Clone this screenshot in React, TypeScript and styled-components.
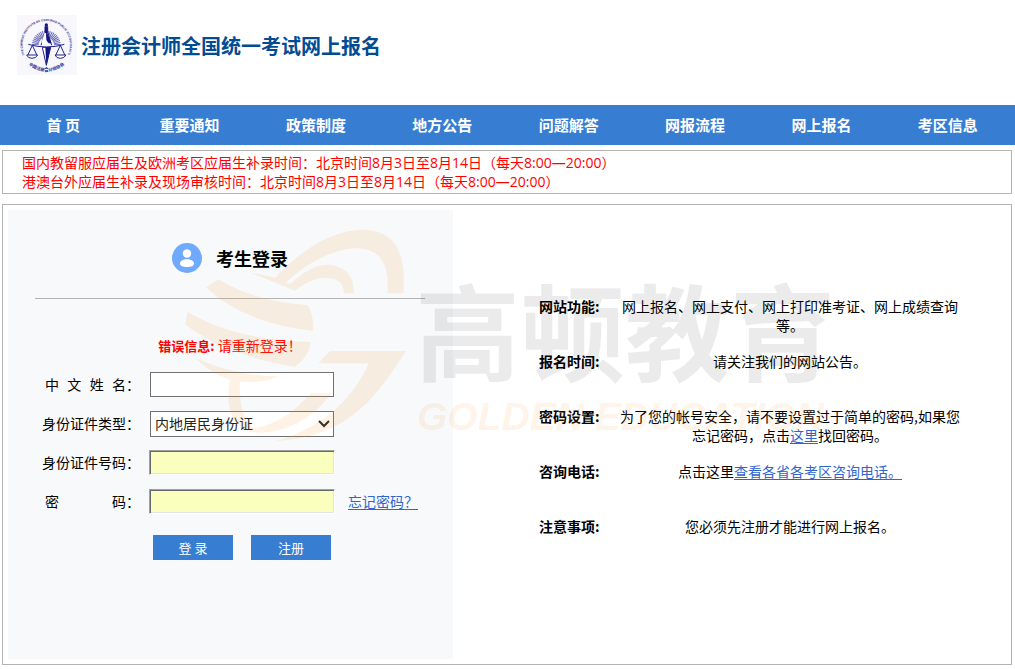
import React from "react";
import styled, { createGlobalStyle } from "styled-components";

const GlobalStyle = createGlobalStyle`
  *, *::before, *::after { box-sizing: border-box; }
  body {
    margin: 0;
    background: #fff;
    color: #000;
    font-family: "Noto Sans CJK SC", sans-serif;
    font-size: 14px;
    line-height: 19px;
  }
  a { color: #3165ce; text-decoration: underline; text-underline-offset: 2px; }
`;

const Header = styled.header`
  display: flex;
  align-items: center;
  gap: 4px;
  padding: 15px 17px 30px;
`;

const SiteTitle = styled.h1`
  margin: 0;
  padding-top: 2px;
  font-size: 20px;
  line-height: 30px;
  font-weight: 700;
  color: #034c92;
`;

const Nav = styled.nav`
  display: grid;
  grid-template-columns: repeat(8, 1fr);
  padding-right: 4px;
  background: #377dd1;
`;

const NavLink = styled.a`
  color: #fff;
  font-size: 15px;
  font-weight: 700;
  line-height: 40px;
  text-align: center;
  text-decoration: none;
`;

const Notice = styled.section`
  margin: 5px 3px 0 2px;
  padding: 2px 19px;
  border: 1px solid #b4b4b4;
  color: #f00;
  font-family: "Open Sans", "Noto Sans CJK SC", sans-serif;
`;

const NoticeLine = styled.p`
  margin: 0;
`;

const Panel = styled.main`
  position: relative;
  display: grid;
  grid-template-columns: minmax(445px, 445fr) minmax(510px, 553fr);
  margin: 10px 3px 4px 2px;
  padding: 5px;
  border: 1px solid #b4b4b4;
`;

const LoginBox = styled.section`
  min-height: 449px;
  padding: 33px 28px 0 27px;
  background: #f7f9fb;
`;

const LoginHead = styled.div`
  display: flex;
  align-items: center;
  justify-content: center;
  gap: 14px;
  padding-bottom: 25px;
  border-bottom: 1px solid #b4b4b4;
`;

const LoginTitle = styled.h2`
  margin: 0;
  font-size: 18px;
  line-height: 30px;
`;

const ErrorLine = styled.p`
  margin: 36px 0 9px;
  line-height: 20px;
  text-align: center;
  color: #f00;
`;

const ErrorName = styled.strong`
  font-size: 13px;
`;

const Field = styled.div`
  display: flex;
  align-items: center;
  height: 39px;
`;

const LabelCell = styled.div`
  display: flex;
  justify-content: flex-end;
  width: 105px;
  margin-right: 9px;
`;

const Label = styled.label<{ $spread?: boolean }>`
  display: flex;
  justify-content: space-between;
  width: ${(p) => (p.$spread ? "95px" : "auto")};
`;

const TextInput = styled.input`
  width: 184px;
  height: 25px;
  margin: 0 1px;
  padding: 0 4px;
  border: 1px solid #707070;
  background: #fff;
  font: inherit;
`;

const InsetInput = styled(TextInput)`
  width: 186px;
  margin: 0;
  border-color: #a0a0a0 #fff #fff #a0a0a0;
  box-shadow: inset 1px 1px #696969, inset -1px -1px #e3e3e3;
  background: #faffbd;
`;

const SelectWrap = styled.div`
  position: relative;
  width: 184px;
  margin: 0 1px;
`;

const Select = styled.select`
  display: block;
  width: 100%;
  height: 26px;
  padding: 0 20px 0 4px;
  border: 1px solid #707070;
  border-radius: 0;
  appearance: none;
  background: #fff;
  color: #222;
  font: inherit;
`;

const Chevron = styled.svg`
  position: absolute;
  top: 8px;
  right: 4px;
  pointer-events: none;
`;

const ForgotLink = styled.a`
  margin-left: 13px;
`;

const Actions = styled.div`
  display: flex;
  gap: 18px;
  margin: 14px 0 0 118px;
`;

const ActionButton = styled.button`
  width: 80px;
  height: 25px;
  padding: 0;
  border: 0;
  background: #377dd1;
  color: #fff;
  font: inherit;
  font-size: 13px;
`;

const InfoList = styled.dl`
  margin: 0;
  padding: 87px 0 0 86px;
`;

const InfoRow = styled.div`
  display: grid;
  grid-template-columns: 78px 346px;
  min-height: 55px;
`;

const InfoName = styled.dt`
  font-weight: 700;
`;

const InfoText = styled.dd`
  margin: 0;
  text-align: center;
`;

const WatermarkLayer = styled.svg`
  position: absolute;
  left: 177px;
  top: 21px;
  pointer-events: none;
`;

const RAYS = Array.from({ length: 23 }, (_, i) => -88 + i * 8);

const Emblem = () => (
  <svg width="60" height="60" viewBox="0 0 180 180" aria-hidden="true">
    <defs>
      <path id="ringTop" d="M25 123 A71 71 0 1 1 150 123" />
      <path id="ringBottom" d="M31 145 A80 80 0 0 0 146 145" />
    </defs>
    <rect width="180" height="180" fill="#f7f7fc" />
    <g fill="#2a2a96" fontFamily="Liberation Sans" fontWeight="700">
      <text fontSize="9">
        <textPath href="#ringTop" startOffset="4">THE CHINESE INSTITUTE OF CERTIFIED PUBLIC ACCOUNTANTS</textPath>
      </text>
      <text fontSize="13" fontFamily="Noto Sans CJK SC" textAnchor="middle">
        <textPath href="#ringBottom" startOffset="50%">中国注册会计师协会</textPath>
      </text>
    </g>
    <g stroke="#6a6ab8" strokeWidth="3">
      {RAYS.map((a) => (
        <line key={a} x1="88" y1="67" x2="88" y2="47" transform={`rotate(${a} 88 90)`} />
      ))}
    </g>
    <g fill="none" stroke="#22228f" strokeWidth="3">
      <path d="M34 88 Q60 96 88 96 Q118 96 142 88" />
      <path d="M46 91 L32 121 M46 91 L60 121 M130 91 L116 121 M130 91 L144 121" />
      <path d="M72 91 L84 50 V34 M104 91 L92 50 V34" />
    </g>
    <path d="M29 120 H62 Q57 130 45 130 Q33 130 29 120 Z M114 120 H147 Q142 130 130 130 Q118 130 114 120 Z" fill="#fff" stroke="#22228f" strokeWidth="3" />
    <path d="M85 46 L73 84 Q84 90 89 78 Z" fill="#fff" />
    <path d="M87 44 L103 84 Q94 88 88 74 Z" fill="#15157f" />
    <circle cx="88" cy="30" r="5" fill="#15157f" />
    <path d="M76 97 L88 151 L101 97 Z" fill="#fff" stroke="#22228f" strokeWidth="3" />
    <path d="M85 97 L88 151 L101 97 Z" fill="#15157f" />
    <path d="M84 34 H92 V54 H84 Z" fill="#15157f" />
  </svg>
);

const UserIcon = () => (
  <svg width="30" height="30" viewBox="0 0 30 30" aria-hidden="true">
    <circle cx="15" cy="15" r="15" fill="#6faaff" />
    <circle cx="15" cy="10.500" r="4.200" fill="#fff" />
    <path d="M8 20.500 C8 18 11 16.200 15 16.200 C19 16.200 22 18 22 20.500 C22 23 19 24 15 24 C11 24 8 23 8 20.500 Z" fill="#fff" />
  </svg>
);

const Watermark = () => (
  <WatermarkLayer width="670" height="220" viewBox="180 226 670 220" aria-hidden="true">
    <g transform="translate(150 210) scale(0.33333)" fill="#f7931e" fillOpacity="0.12">
      <path d="M302 188 Q340 194 375 203 C460 115 550 58 645 59 C745 65 768 140 760 250 H712 C719 160 690 112 610 115 C530 122 460 170 408 217 L420 223 C460 185 500 163 532 164 C590 168 614 200 611 250 H582 C581 215 560 203 520 203 C490 205 460 222 435 242 Q360 212 302 188 Z" />
      <path d="M205 208 L168 232 C230 295 350 350 490 362 C490 330 486 305 472 285 C380 278 290 260 205 208 Z" />
      <path d="M113 305 L106 343 C180 405 320 455 435 470 C462 450 480 425 481 396 C340 395 200 360 113 305 Z" />
      <path d="M137 443 C210 480 310 500 385 498 C350 515 310 519 270 515 C265 580 285 655 320 655 C385 640 440 600 482 550 H545 C480 635 400 670 320 668 C245 660 225 590 240 510 C200 495 165 475 137 443 Z" />
      <path d="M540 423 H768 C690 540 610 680 380 693 C490 660 600 590 656 460 H505 Z" />
    </g>
    <text x="415" y="373" fontFamily="Noto Sans CJK SC" fontWeight="700" fontSize="105" fill="#000" fillOpacity="0.08">
      高顿教育
    </text>
    <text x="417" y="430" fontFamily="Liberation Sans" fontWeight="700" fontStyle="italic" fontSize="39" fill="#f7931e" fillOpacity="0.11">
      GOLDEN EDUCATION
    </text>
  </WatermarkLayer>
);

const NAV_ITEMS = ["首 页", "重要通知", "政策制度", "地方公告", "问题解答", "网报流程", "网上报名", "考区信息"];

const INFO: { name: string; text: React.ReactNode }[] = [
  { name: "网站功能:", text: "网上报名、网上支付、网上打印准考证、网上成绩查询等。" },
  { name: "报名时间:", text: "请关注我们的网站公告。" },
  {
    name: "密码设置:",
    text: (
      <>
        为了您的帐号安全，请不要设置过于简单的密码,如果您忘记密码，点击<a href="#reset">这里</a>找回密码。
      </>
    ),
  },
  {
    name: "咨询电话:",
    text: (
      <>
        点击这里<a href="#phones">查看各省各考区咨询电话。</a>
      </>
    ),
  },
  { name: "注意事项:", text: "您必须先注册才能进行网上报名。" },
];

export default function App() {
  return (
    <>
      <GlobalStyle />
      <Header>
        <Emblem />
        <SiteTitle>注册会计师全国统一考试网上报名</SiteTitle>
      </Header>
      <Nav>
        {NAV_ITEMS.map((item) => (
          <NavLink key={item} href="#nav">
            {item}
          </NavLink>
        ))}
      </Nav>
      <Notice>
        <NoticeLine>国内教留服应届生及欧洲考区应届生补录时间：北京时间8月3日至8月14日（每天8:00—20:00）</NoticeLine>
        <NoticeLine>港澳台外应届生补录及现场审核时间：北京时间8月3日至8月14日（每天8:00—20:00）</NoticeLine>
      </Notice>
      <Panel>
        <LoginBox>
          <LoginHead>
            <UserIcon />
            <LoginTitle>考生登录</LoginTitle>
          </LoginHead>
          <form onSubmit={(e) => e.preventDefault()}>
            <ErrorLine>
              <ErrorName>错误信息:</ErrorName> 请重新登录！
            </ErrorLine>
            <Field>
              <LabelCell>
                <Label htmlFor="name" $spread>
                  <span>中</span>
                  <span>文</span>
                  <span>姓</span>
                  <span>名：</span>
                </Label>
              </LabelCell>
              <TextInput id="name" type="text" />
            </Field>
            <Field>
              <LabelCell>
                <Label htmlFor="idType">身份证件类型：</Label>
              </LabelCell>
              <SelectWrap>
                <Select id="idType">
                  <option>内地居民身份证</option>
                </Select>
                <Chevron width="12" height="10" viewBox="0 0 12 10" aria-hidden="true">
                  <path d="M1 2 L6 7 L11 2" fill="none" stroke="#222" strokeWidth="2" />
                </Chevron>
              </SelectWrap>
            </Field>
            <Field>
              <LabelCell>
                <Label htmlFor="idNumber">身份证件号码：</Label>
              </LabelCell>
              <InsetInput id="idNumber" type="text" />
            </Field>
            <Field>
              <LabelCell>
                <Label htmlFor="password" $spread>
                  <span>密</span>
                  <span>码：</span>
                </Label>
              </LabelCell>
              <InsetInput id="password" type="password" />
              <ForgotLink href="#forgot">忘记密码？</ForgotLink>
            </Field>
            <Actions>
              <ActionButton type="submit">登 录</ActionButton>
              <ActionButton type="button">注册</ActionButton>
            </Actions>
          </form>
        </LoginBox>
        <InfoList>
          {INFO.map((row) => (
            <InfoRow key={row.name}>
              <InfoName>{row.name}</InfoName>
              <InfoText>{row.text}</InfoText>
            </InfoRow>
          ))}
        </InfoList>
        <Watermark />
      </Panel>
    </>
  );
}
